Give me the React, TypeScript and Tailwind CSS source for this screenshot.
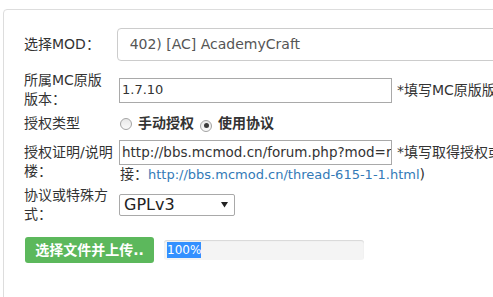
import React from "react";

const font = { fontFamily: '"DejaVu Sans", "Noto Sans CJK SC", sans-serif' };

function Radio({ checked }: { checked?: boolean }) {
  return (
    <span className="relative inline-flex h-[12px] w-[12px] shrink-0 items-center justify-center rounded-full border border-[#a3a3a3] bg-gradient-to-b from-[#e8e8e8] to-[#fafafa]">
      {checked && <span className="h-[5px] w-[5px] rounded-full bg-[#3a3a3a]" />}
    </span>
  );
}

export default function App() {
  return (
    <div className="h-[297px] w-[493px] overflow-hidden bg-white text-[14px] text-[#333]" style={font}>
      <div className="ml-[3px] mt-[9px] h-[400px] w-[700px] rounded-tl-[4px] border border-[#dddddd] pl-[20px] pt-[18px]">
        {/* Row 1 */}
        <div className="flex h-[33px] items-center">
          <div className="w-[95px] whitespace-nowrap leading-[19px]">选择MOD：</div>
          <div className="flex h-[33px] w-[600px] items-center rounded-[4px] border border-[#cccccc] pl-[12px] text-[#555]">
            402) [AC] AcademyCraft
          </div>
        </div>

        {/* Row 2 */}
        <div className="mt-[10px] flex h-[38px] items-center">
          <div className="w-[95px] whitespace-nowrap leading-[19px]">
            所属MC原版
            <br />
            版本：
          </div>
          <div className="flex items-center whitespace-nowrap">
            <div className="flex h-[25px] w-[273px] items-center border border-[#a9a9a9] pl-[2px] text-[13px]">1.7.10</div>
            <span className="ml-[5px]">*填写MC原版版本号</span>
          </div>
        </div>

        {/* Row 3 */}
        <div className="mt-[5px] flex h-[19px] items-center">
          <div className="w-[95px] whitespace-nowrap leading-[19px]">授权类型</div>
          <div className="ml-[1px] flex items-center whitespace-nowrap font-bold">
            <Radio />
            <span className="ml-[6px]">手动授权</span>
            <span className="ml-[6px]"><Radio checked /></span>
            <span className="ml-[6px]">使用协议</span>
          </div>
        </div>

        {/* Row 4 */}
        <div className="mt-[7px] flex items-start">
          <div className="w-[95px] whitespace-nowrap pt-[3px] leading-[19px]">
            授权证明/说明
            <br />
            楼：
          </div>
          <div className="flex flex-col whitespace-nowrap">
            <div className="flex items-center">
              <div className="flex h-[25px] w-[273px] items-center overflow-hidden border border-[#a9a9a9] pl-[2px] text-[13.5px]">
                http://bbs.mcmod.cn/forum.php?mod=redirect
              </div>
              <span className="ml-[5px]">*填写取得授权或说明帖子的链</span>
            </div>
            <div className="ml-[1px] h-[19px] leading-[19px]">
              接：<span className="text-[13px] text-[#337ab7]">http://bbs.mcmod.cn/thread-615-1-1.html</span>)
            </div>
          </div>
        </div>

        {/* Row 5 */}
        <div className="mt-[2px] flex h-[38px] items-center">
          <div className="w-[95px] whitespace-nowrap leading-[19px]">
            协议或特殊方
            <br />
            式：
          </div>
          <div className="relative flex h-[22px] w-[116px] items-center rounded-[2px] border border-[#a9a9a9] bg-white pl-[4px] text-[16px] text-[#222]">
            GPLv3
            <svg className="absolute right-[6px] top-[7px]" width="7" height="6" viewBox="0 0 7 6">
              <path d="M0 0 H7 L3.5 5.5 Z" fill="#222" />
            </svg>
          </div>
        </div>

        {/* Upload row */}
        <div className="mt-[13px] flex items-center">
          <div className="ml-[1px] flex h-[26px] w-[129px] items-center justify-center rounded-[3px] bg-[#5cb85c] font-bold text-white">
            选择文件并上传..
          </div>
          <div className="ml-[10px] flex h-[20px] w-[200px] items-center rounded-[3px] bg-[#f4f4f4] pl-[3px] shadow-[inset_0_1px_1px_rgba(0,0,0,0.12)]">
            <span className="bg-[#3390ff] text-[12px] leading-[16px] text-white">100%</span>
          </div>
        </div>
      </div>
    </div>
  );
}
